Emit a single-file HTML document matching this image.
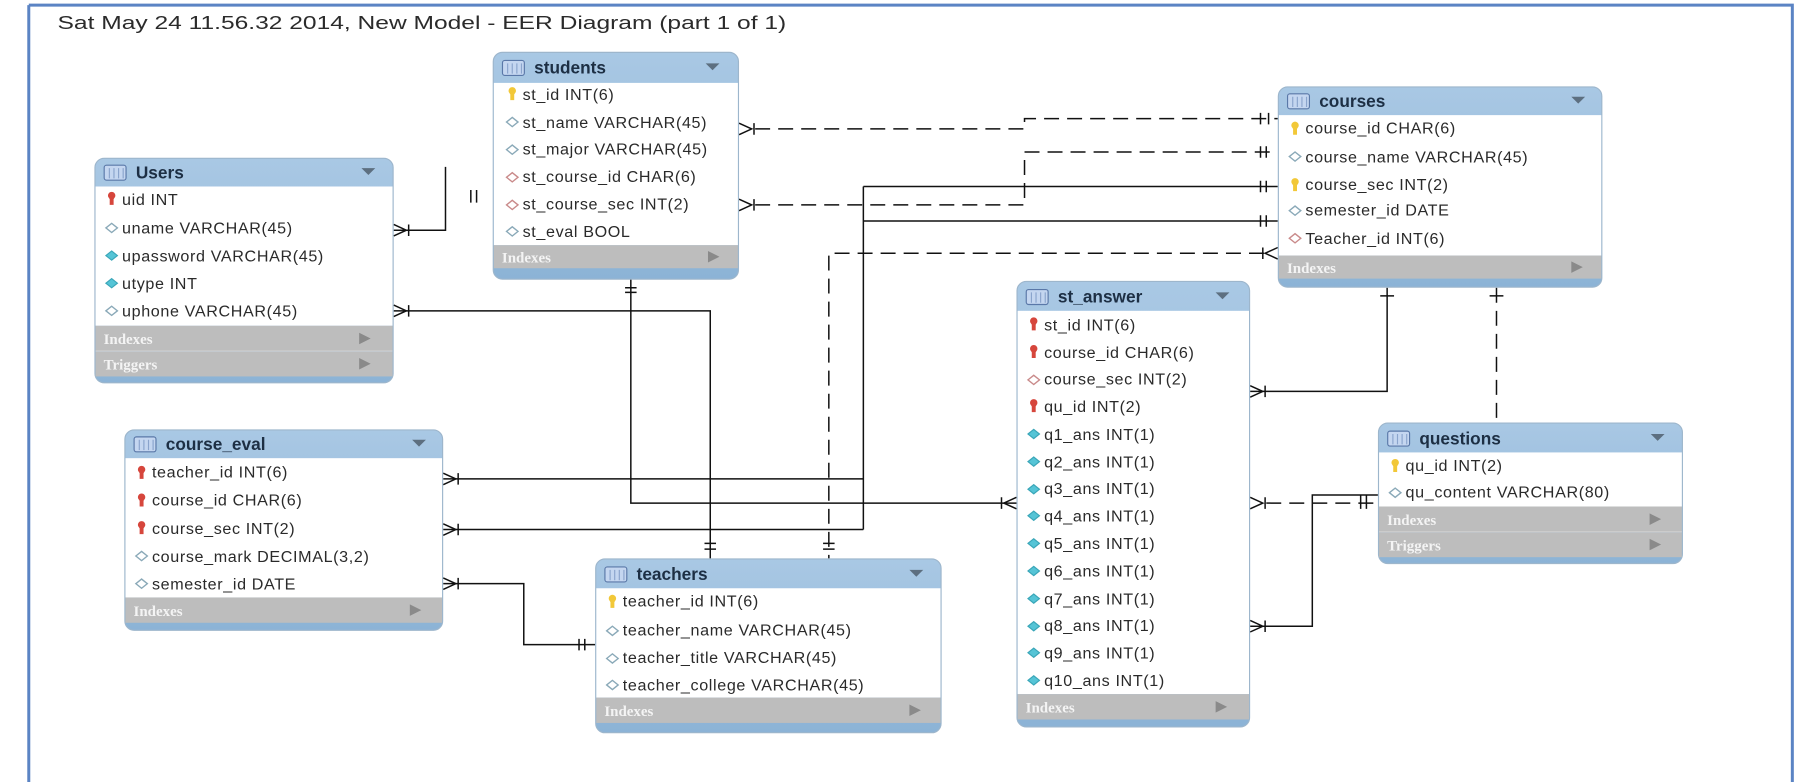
<!DOCTYPE html>
<html><head><meta charset="utf-8"><style>
html,body{margin:0;padding:0;background:#fff;width:1805px;height:782px;overflow:hidden}
svg{display:block}
.r{font-family:"Liberation Sans",Arial,sans-serif;font-size:14px;fill:#2a2a2a;letter-spacing:0.55px}
.h{font-family:"Liberation Sans",Arial,sans-serif;font-size:15px;font-weight:bold;fill:#1d2f44}
.ix{font-family:"Liberation Serif",serif;font-size:13px;font-weight:bold;fill:#f4f4f4}
.ln{stroke:#111;stroke-width:1.3;fill:none}
.dl{stroke:#111;stroke-width:1.3;fill:none;stroke-dasharray:13 7}
</style></head><body>
<svg width="1805" height="782" viewBox="0 0 1568 679.3" preserveAspectRatio="none" xmlns="http://www.w3.org/2000/svg">
<defs>
<linearGradient id="hg" x1="0" y1="0" x2="0" y2="1"><stop offset="0" stop-color="#a9c8e4"/><stop offset="1" stop-color="#8cb3d6"/></linearGradient>
<symbol id="kY" viewBox="-6 -6 12 12" overflow="visible"><path d="M-3,-2 a3.2,3.2 0 1,1 6,0 l-1.3,2 v5 h-3.4 v-5z" fill="#f2c838"/></symbol>
<symbol id="kR" viewBox="-6 -6 12 12" overflow="visible"><path d="M-3,-2 a3.2,3.2 0 1,1 6,0 l-1.3,2 v5 h-3.4 v-5z" fill="#d6463c"/></symbol>
<symbol id="dO" viewBox="-6 -6 12 12" overflow="visible"><path d="M-5,0 L0,-4 L5,0 L0,4Z" fill="#fff" stroke="#8aa9b8" stroke-width="1.2"/></symbol>
<symbol id="dR" viewBox="-6 -6 12 12" overflow="visible"><path d="M-5,0 L0,-4 L5,0 L0,4Z" fill="#fff" stroke="#c98a8a" stroke-width="1.2"/></symbol>
<symbol id="dF" viewBox="-6 -6 12 12" overflow="visible"><path d="M-5,0 L0,-4 L5,0 L0,4Z" fill="#55c4d6" stroke="#3aa6b8" stroke-width="1"/></symbol>
<symbol id="ti" viewBox="0 0 20 14" overflow="visible"><rect x="0.5" y="0.5" width="19" height="13" rx="2" fill="#c4d6f0" stroke="#5a78a8"/><path d="M5,3V12M9,3V12M13,3V12M17,3V12" stroke="#8aa4cc" stroke-width="1"/></symbol>
</defs>

<path d="M25,4.5 H1557 V690 M25,4.5 V690" stroke="#5b84c4" stroke-width="2.6" fill="none"/>
<text x="50" y="25" font-family="Liberation Sans,Arial,sans-serif" font-size="16" fill="#2b2b2b" textLength="633" lengthAdjust="spacingAndGlyphs">Sat May 24 11.56.32 2014, New Model - EER Diagram (part 1 of 1)</text>

<path class="ln" d="M342,200 H387 V145"/>
<path class="ln" d="M342,195 L353,200 L342,205 M355,195 V205"/>
<path class="ln" d="M409,165 V176 M414,165 V176"/>

<path class="ln" d="M342,270 H617 V485"/>
<path class="ln" d="M342,265 L353,270 L342,275 M355,265 V275 M612,472 H622 M612,477 H622"/>

<path class="dl" d="M656,112 H890 V103 H1110"/>
<path class="ln" d="M642,107 L653,112 L642,117 M655,107 V117 M1095,98 V108 M1102,98 V108"/>
<path class="dl" d="M656,178 H890 V132 H1110"/>
<path class="ln" d="M642,173 L653,178 L642,183 M655,173 V183 M1095,127 V137 M1100,127 V137"/>

<path class="ln" d="M750,162 H1110 M750,192 H1110 M750,162 V460"/>
<path class="ln" d="M1095,157 V167 M1100,157 V167 M1095,187 V197 M1100,187 V197"/>
<path class="ln" d="M385,416 H750 M385,460 H750"/>
<path class="ln" d="M385,411 L396,416 L385,421 M398,411 V421 M385,455 L396,460 L385,465 M398,455 V465"/>

<path class="dl" d="M1098,220 H720 V485"/>
<path class="ln" d="M1110,215 L1099,220 L1110,225 M1097,215 V225 M715,472 H725 M715,477 H725"/>

<path class="ln" d="M548,242 V437 H883"/>
<path class="ln" d="M543,250 H553 M543,254 H553 M883,432 L872,437 L883,442 M870,432 V442"/>

<path class="ln" d="M385,507 H455 V560 H517"/>
<path class="ln" d="M385,502 L396,507 L385,512 M398,502 V512 M503,555 V565 M508,555 V565"/>

<path class="ln" d="M1086,340 H1205 V250"/>
<path class="ln" d="M1086,335 L1097,340 L1086,345 M1099,335 V345 M1199,257 H1211"/>

<path class="dl" d="M1300,250 V367"/>
<path class="ln" d="M1294,257 H1306"/>

<path class="dl" d="M1100,437 H1197"/>
<path class="ln" d="M1086,432 L1097,437 L1086,442 M1099,432 V442 M1182,430 V442 M1187,430 V442"/>
<path class="ln" d="M1086,544 H1140 V430 H1197"/>
<path class="ln" d="M1086,539 L1097,544 L1086,549 M1099,539 V549"/>

<g transform="translate(428,45)">
<rect x="0.5" y="0.5" width="213" height="197" rx="8" fill="url(#hg)" stroke="#9db6cc"/>
<rect x="1" y="27" width="212" height="141" fill="#fff"/>
<rect x="1" y="168" width="212" height="20" fill="#bdbdbd"/>
<use href="#ti" x="8" y="7" width="20" height="14"/>
<text class="h" x="36" y="19">students</text>
<path d="M185,10 h12 l-6,6z" fill="#5d6f80"/>
<use href="#kY" x="11" y="31" width="12" height="12"/><text class="r" x="26" y="42">st_id INT(6)</text>
<use href="#dO" x="11" y="55" width="12" height="12"/><text class="r" x="26" y="66">st_name VARCHAR(45)</text>
<use href="#dO" x="11" y="79" width="12" height="12"/><text class="r" x="26" y="89">st_major VARCHAR(45)</text>
<use href="#dR" x="11" y="103" width="12" height="12"/><text class="r" x="26" y="113">st_course_id CHAR(6)</text>
<use href="#dR" x="11" y="127" width="12" height="12"/><text class="r" x="26" y="137">st_course_sec INT(2)</text>
<use href="#dO" x="11" y="150" width="12" height="12"/><text class="r" x="26" y="161">st_eval BOOL</text>
<text class="ix" x="8" y="183">Indexes</text><path d="M187,173 l10,5 l-10,5z" fill="#8a8a8a"/>
</g>

<g transform="translate(82,137)">
<rect x="0.5" y="0.5" width="259" height="195" rx="8" fill="url(#hg)" stroke="#9db6cc"/>
<rect x="1" y="25" width="258" height="121" fill="#fff"/>
<rect x="1" y="146" width="258" height="22" fill="#bdbdbd"/>
<rect x="1" y="168.5" width="258" height="21.5" fill="#bdbdbd"/>
<path d="M1,168 H259" stroke="#d2d2d2"/>
<use href="#ti" x="8" y="6" width="20" height="14"/>
<text class="h" x="36" y="18">Users</text>
<path d="M232,9 h12 l-6,6z" fill="#5d6f80"/>
<use href="#kR" x="9" y="30" width="12" height="12"/><text class="r" x="24" y="41">uid INT</text>
<use href="#dO" x="9" y="55" width="12" height="12"/><text class="r" x="24" y="66">uname VARCHAR(45)</text>
<use href="#dF" x="9" y="79" width="12" height="12"/><text class="r" x="24" y="90">upassword VARCHAR(45)</text>
<use href="#dF" x="9" y="103" width="12" height="12"/><text class="r" x="24" y="114">utype INT</text>
<use href="#dO" x="9" y="127" width="12" height="12"/><text class="r" x="24" y="138">uphone VARCHAR(45)</text>
<text class="ix" x="8" y="162">Indexes</text><path d="M230,152 l10,5 l-10,5z" fill="#8a8a8a"/>
<text class="ix" x="8" y="184">Triggers</text><path d="M230,174 l10,5 l-10,5z" fill="#8a8a8a"/>
</g>

<g transform="translate(108,373)">
<rect x="0.5" y="0.5" width="276" height="174" rx="8" fill="url(#hg)" stroke="#9db6cc"/>
<rect x="1" y="25" width="275" height="121" fill="#fff"/>
<rect x="1" y="146" width="275" height="22" fill="#bdbdbd"/>
<use href="#ti" x="8" y="6" width="20" height="14"/>
<text class="h" x="36" y="18">course_eval</text>
<path d="M250,9 h12 l-6,6z" fill="#5d6f80"/>
<use href="#kR" x="9" y="32" width="12" height="12"/><text class="r" x="24" y="42">teacher_id INT(6)</text>
<use href="#kR" x="9" y="56" width="12" height="12"/><text class="r" x="24" y="66">course_id CHAR(6)</text>
<use href="#kR" x="9" y="80" width="12" height="12"/><text class="r" x="24" y="91">course_sec INT(2)</text>
<use href="#dO" x="9" y="104" width="12" height="12"/><text class="r" x="24" y="115">course_mark DECIMAL(3,2)</text>
<use href="#dO" x="9" y="128" width="12" height="12"/><text class="r" x="24" y="139">semester_id DATE</text>
<text class="ix" x="8" y="162">Indexes</text><path d="M248,152 l10,5 l-10,5z" fill="#8a8a8a"/>
</g>

<g transform="translate(517,485)">
<rect x="0.5" y="0.5" width="300" height="151" rx="8" fill="url(#hg)" stroke="#9db6cc"/>
<rect x="1" y="26" width="299" height="95" fill="#fff"/>
<rect x="1" y="121" width="299" height="22" fill="#bdbdbd"/>
<use href="#ti" x="8" y="7" width="20" height="14"/>
<text class="h" x="36" y="19">teachers</text>
<path d="M273,10 h12 l-6,6z" fill="#5d6f80"/>
<use href="#kY" x="9" y="32" width="12" height="12"/><text class="r" x="24" y="42">teacher_id INT(6)</text>
<use href="#dO" x="9" y="57" width="12" height="12"/><text class="r" x="24" y="67">teacher_name VARCHAR(45)</text>
<use href="#dO" x="9" y="81" width="12" height="12"/><text class="r" x="24" y="91">teacher_title VARCHAR(45)</text>
<use href="#dO" x="9" y="104" width="12" height="12"/><text class="r" x="24" y="115">teacher_college VARCHAR(45)</text>
<text class="ix" x="8" y="137">Indexes</text><path d="M273,127 l10,5 l-10,5z" fill="#8a8a8a"/>
</g>

<g transform="translate(883,244)">
<rect x="0.5" y="0.5" width="202" height="387" rx="8" fill="url(#hg)" stroke="#9db6cc"/>
<rect x="1" y="26" width="201" height="333" fill="#fff"/>
<rect x="1" y="359" width="201" height="22" fill="#bdbdbd"/>
<use href="#ti" x="8" y="7" width="20" height="14"/>
<text class="h" x="36" y="19">st_answer</text>
<path d="M173,10 h12 l-6,6z" fill="#5d6f80"/>
<use href="#kR" x="9" y="32" width="12" height="12"/><text class="r" x="24" y="43">st_id INT(6)</text>
<use href="#kR" x="9" y="56" width="12" height="12"/><text class="r" x="24" y="67">course_id CHAR(6)</text>
<use href="#dR" x="9" y="80" width="12" height="12"/><text class="r" x="24" y="90">course_sec INT(2)</text>
<use href="#kR" x="9" y="103" width="12" height="12"/><text class="r" x="24" y="114">qu_id INT(2)</text>
<use href="#dF" x="9" y="127" width="12" height="12"/><text class="r" x="24" y="138">q1_ans INT(1)</text>
<use href="#dF" x="9" y="151" width="12" height="12"/><text class="r" x="24" y="162">q2_ans INT(1)</text>
<use href="#dF" x="9" y="175" width="12" height="12"/><text class="r" x="24" y="185">q3_ans INT(1)</text>
<use href="#dF" x="9" y="198" width="12" height="12"/><text class="r" x="24" y="209">q4_ans INT(1)</text>
<use href="#dF" x="9" y="222" width="12" height="12"/><text class="r" x="24" y="233">q5_ans INT(1)</text>
<use href="#dF" x="9" y="246" width="12" height="12"/><text class="r" x="24" y="257">q6_ans INT(1)</text>
<use href="#dF" x="9" y="270" width="12" height="12"/><text class="r" x="24" y="281">q7_ans INT(1)</text>
<use href="#dF" x="9" y="294" width="12" height="12"/><text class="r" x="24" y="304">q8_ans INT(1)</text>
<use href="#dF" x="9" y="317" width="12" height="12"/><text class="r" x="24" y="328">q9_ans INT(1)</text>
<use href="#dF" x="9" y="341" width="12" height="12"/><text class="r" x="24" y="352">q10_ans INT(1)</text>
<text class="ix" x="8" y="375">Indexes</text><path d="M173,365 l10,5 l-10,5z" fill="#8a8a8a"/>
</g>

<g transform="translate(1110,75)">
<rect x="0.5" y="0.5" width="281" height="174" rx="8" fill="url(#hg)" stroke="#9db6cc"/>
<rect x="1" y="25" width="280" height="122" fill="#fff"/>
<rect x="1" y="147" width="280" height="20" fill="#bdbdbd"/>
<use href="#ti" x="8" y="6" width="20" height="14"/>
<text class="h" x="36" y="18">courses</text>
<path d="M255,9 h12 l-6,6z" fill="#5d6f80"/>
<use href="#kY" x="9" y="31" width="12" height="12"/><text class="r" x="24" y="41">course_id CHAR(6)</text>
<use href="#dO" x="9" y="55" width="12" height="12"/><text class="r" x="24" y="66">course_name VARCHAR(45)</text>
<use href="#kY" x="9" y="80" width="12" height="12"/><text class="r" x="24" y="90">course_sec INT(2)</text>
<use href="#dO" x="9" y="102" width="12" height="12"/><text class="r" x="24" y="112">semester_id DATE</text>
<use href="#dR" x="9" y="126" width="12" height="12"/><text class="r" x="24" y="137">Teacher_id INT(6)</text>
<text class="ix" x="8" y="162">Indexes</text><path d="M255,152 l10,5 l-10,5z" fill="#8a8a8a"/>
</g>

<g transform="translate(1197,367)">
<rect x="0.5" y="0.5" width="264" height="122" rx="8" fill="url(#hg)" stroke="#9db6cc"/>
<rect x="1" y="26" width="263" height="47" fill="#fff"/>
<rect x="1" y="73" width="263" height="22" fill="#bdbdbd"/>
<rect x="1" y="95.5" width="263" height="21.5" fill="#bdbdbd"/>
<path d="M1,95 H264" stroke="#d2d2d2"/>
<use href="#ti" x="8" y="7" width="20" height="14"/>
<text class="h" x="36" y="19">questions</text>
<path d="M237,10 h12 l-6,6z" fill="#5d6f80"/>
<use href="#kY" x="9" y="32" width="12" height="12"/><text class="r" x="24" y="42">qu_id INT(2)</text>
<use href="#dO" x="9" y="55" width="12" height="12"/><text class="r" x="24" y="65">qu_content VARCHAR(80)</text>
<text class="ix" x="8" y="89">Indexes</text><path d="M236,79 l10,5 l-10,5z" fill="#8a8a8a"/>
<text class="ix" x="8" y="111">Triggers</text><path d="M236,101 l10,5 l-10,5z" fill="#8a8a8a"/>
</g>
</svg>
</body></html>
